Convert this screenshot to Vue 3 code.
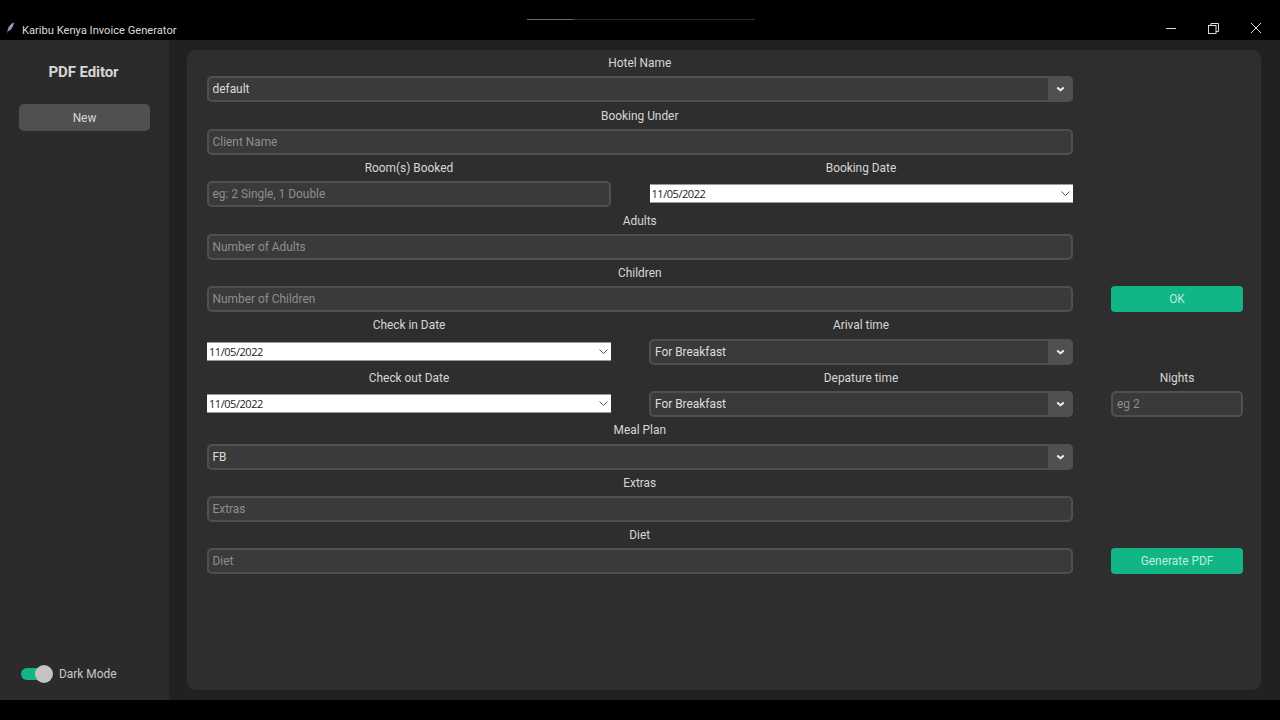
<script setup>
const rows = [
  { k: 'l', c: 'full', t: 'Hotel Name' },
  { k: 's', c: 'full', t: 'default' },
  { k: 'l', c: 'full', t: 'Booking Under' },
  { k: 'i', c: 'full', t: 'Client Name' },
  { k: 'l', c: 'c1', t: 'Room(s) Booked' },
  { k: 'l', c: 'c2', t: 'Booking Date' },
  { k: 'i', c: 'c1', t: 'eg: 2 Single, 1 Double' },
  { k: 'd', c: 'c2', t: '11/05/2022' },
  { k: 'l', c: 'full', t: 'Adults' },
  { k: 'i', c: 'full', t: 'Number of Adults' },
  { k: 'l', c: 'full', t: 'Children' },
  { k: 'i', c: 'full', t: 'Number of Children' },
  { k: 'b', c: 'c3', t: 'OK' },
  { k: 'l', c: 'c1', t: 'Check in Date' },
  { k: 'l', c: 'c2', t: 'Arival time' },
  { k: 'd', c: 'c1', t: '11/05/2022' },
  { k: 's', c: 'c2', t: 'For Breakfast' },
  { k: 'l', c: 'c1', t: 'Check out Date' },
  { k: 'l', c: 'c2', t: 'Depature time' },
  { k: 'l', c: 'c3', t: 'Nights' },
  { k: 'd', c: 'c1', t: '11/05/2022' },
  { k: 's', c: 'c2', t: 'For Breakfast' },
  { k: 'i', c: 'c3', t: 'eg 2' },
  { k: 'l', c: 'full', t: 'Meal Plan' },
  { k: 's', c: 'full', t: 'FB' },
  { k: 'l', c: 'full', t: 'Extras' },
  { k: 'i', c: 'full', t: 'Extras' },
  { k: 'l', c: 'full', t: 'Diet' },
  { k: 'i', c: 'full', t: 'Diet' },
  { k: 'b', c: 'c3', t: 'Generate PDF' }
]
</script>

<template>
  <div class="screen">
    <header class="titlebar">
      <div class="title">
        <svg class="quill" width="9" height="12" viewBox="0 0 9 12">
          <path d="M8 0.5C5 1.5 2.5 4 1.6 8.2L1 11.5L2 9.2C5 8.4 7.2 5 8 0.5Z" fill="#8d9cc0" />
        </svg>
        <span>Karibu Kenya Invoice Generator</span>
      </div>
      <div class="progress"><i></i></div>
      <div class="winbtns">
        <svg width="10" height="10" viewBox="0 0 10 10"><path d="M0 5.5H10" stroke="#ddd" stroke-width="1" /></svg>
        <svg width="11" height="11" viewBox="0 0 11 11" fill="none" stroke="#ddd" stroke-width="1">
          <rect x="0.5" y="2.5" width="7.5" height="8" />
          <path d="M3 2.5V0.5H10.5V8.5H8" />
        </svg>
        <svg width="12" height="12" viewBox="0 0 12 12"><path d="M1 1L11 11M11 1L1 11" stroke="#ddd" stroke-width="1" /></svg>
      </div>
    </header>

    <div class="window">
      <aside class="sidebar">
        <h1>PDF Editor</h1>
        <button class="new">New</button>
        <div class="mode">
          <span class="switch"><i></i></span>
          <span>Dark Mode</span>
        </div>
      </aside>

      <main class="panel">
        <div class="form">
          <template v-for="(r, n) in rows" :key="n">
            <div v-if="r.k === 'l'" class="label" :class="r.c">{{ r.t }}</div>
            <div v-else-if="r.k === 'i'" class="input" :class="r.c">{{ r.t }}</div>
            <div v-else-if="r.k === 's'" class="select" :class="r.c">
              <span class="value">{{ r.t }}</span>
              <span class="arrow">
                <svg width="9" height="6" viewBox="0 0 9 6" fill="none"><path d="M1.2 1.4L4.5 4.2L7.8 1.4" stroke="#f2f2f2" stroke-width="2" /></svg>
              </span>
            </div>
            <div v-else-if="r.k === 'd'" class="date" :class="r.c">
              <span>{{ r.t }}</span>
              <svg width="9" height="5" viewBox="0 0 9 5" fill="none"><path d="M0.5 0.5L4.5 4.5L8.5 0.5" stroke="#555" stroke-width="1" /></svg>
            </div>
            <button v-else class="go" :class="r.c">{{ r.t }}</button>
          </template>
        </div>
      </main>
    </div>
    <div class="bottom"></div>
  </div>
</template>

<style>
html, body { margin: 0; background: #000; }
</style>

<style scoped>
.screen {
  width: 1280px;
  height: 720px;
  display: flex;
  flex-direction: column;
  background: #000;
  font-family: Roboto, "Liberation Sans", sans-serif;
  font-size: 12px;
  overflow: hidden;
}
.titlebar {
  height: 40px;
  flex: none;
  display: flex;
  align-items: flex-end;
  justify-content: space-between;
  position: relative;
  background: #000;
}
.title {
  display: flex;
  align-items: center;
  gap: 7px;
  padding: 0 0 3px 6px;
  color: #dcdcdc;
  font-size: 11.15px;
  line-height: 13px;
}
.quill { margin-top: -6px; }
.progress {
  position: absolute;
  left: 527px;
  top: 19px;
  width: 228px;
  height: 1px;
  background: #2c2c2c;
}
.progress i {
  display: block;
  width: 46px;
  height: 1px;
  background: #6a6a6a;
}
.winbtns {
  display: flex;
  align-items: center;
  gap: 31.5px;
  padding: 0 18px 6px 0;
}
.window {
  height: 660px;
  flex: none;
  display: flex;
  background: #212121;
}
.sidebar {
  width: 169px;
  flex: none;
  background: #2b2b2b;
  display: flex;
  flex-direction: column;
  align-items: center;
  box-sizing: border-box;
}
.sidebar h1 {
  margin: 22px 2px 0 0;
  height: 20px;
  font-size: 15px;
  line-height: 20px;
  font-weight: 700;
  letter-spacing: -0.1px;
  color: #d6d6d6;
}
.new {
  margin: 22px 0 0 0;
  width: 131px;
  height: 27px;
  border: 0;
  border-radius: 5px;
  background: #505050;
  color: #d8d8d8;
  font: 11.9px Roboto, "Liberation Sans", sans-serif;
}
.mode {
  margin-top: auto;
  margin-bottom: 17px;
  align-self: flex-start;
  padding-left: 21px;
  display: flex;
  align-items: center;
  gap: 6px;
  color: #c8c8c8;
  font-size: 11.9px;
}
.switch {
  width: 32px;
  height: 18px;
  position: relative;
  display: block;
}
.switch::before {
  content: "";
  position: absolute;
  left: 0;
  right: 4px;
  top: 3px;
  height: 12px;
  border-radius: 6px;
  background: #12b585;
}
.switch i {
  position: absolute;
  right: 0;
  top: 0;
  width: 18px;
  height: 18px;
  border-radius: 50%;
  background: #c4c4c6;
}
.panel {
  width: 1074px;
  height: 640px;
  margin: 10px 0 0 18px;
  background: #2e2e2e;
  border-radius: 9px;
  box-sizing: border-box;
  padding-left: 20px;
}
.form {
  display: grid;
  grid-template-columns: 404px 423px 132px;
  column-gap: 38.5px;
  grid-auto-rows: 26.44px 26px;
  align-items: center;
}
.full { grid-column: 1 / 3; }
.c1 { grid-column: 1; }
.c2 { grid-column: 2; }
.c3 { grid-column: 3; }
.label {
  text-align: center;
  color: #d6d6d6;
  font-size: 11.9px;
  line-height: 14px;
}
.input, .select {
  height: 26px;
  box-sizing: border-box;
  border: 2px solid #505050;
  border-radius: 5px;
  background: #3a3a3a;
  display: flex;
  align-items: center;
  padding-left: 4px;
  font-size: 11.9px;
}
.input { color: #8e8e8e; margin-left: -0.5px; }
.input.c3 { margin-left: 0; }
.select {
  color: #dcdcdc;
  margin-left: -0.5px;
  position: relative;
}
.arrow {
  position: absolute;
  right: -2px;
  top: -2px;
  width: 25px;
  height: 26px;
  background: #505050;
  border-radius: 0 5px 5px 0;
  display: flex;
  align-items: center;
  justify-content: center;
}
.date {
  height: 19px;
  margin-top: -1px;
  background: #fff;
  border: 1px solid #9a9a9a;
  border-width: 1px 0 1px 0;
  box-sizing: border-box;
  display: flex;
  align-items: center;
  justify-content: space-between;
  padding: 0 3px 0 2px;
  color: #1a1a1a;
  font-size: 11px;
  font-family: "Open Sans", "Liberation Sans", sans-serif;
}
.date span { letter-spacing: -0.45px; }
.go {
  height: 26px;
  border: 0;
  border-radius: 4px;
  background: #12b585;
  color: #bdeedd;
  font: 11.9px Roboto, "Liberation Sans", sans-serif;
  padding: 0;
}
.bottom { flex: 1; background: #000; }
</style>
